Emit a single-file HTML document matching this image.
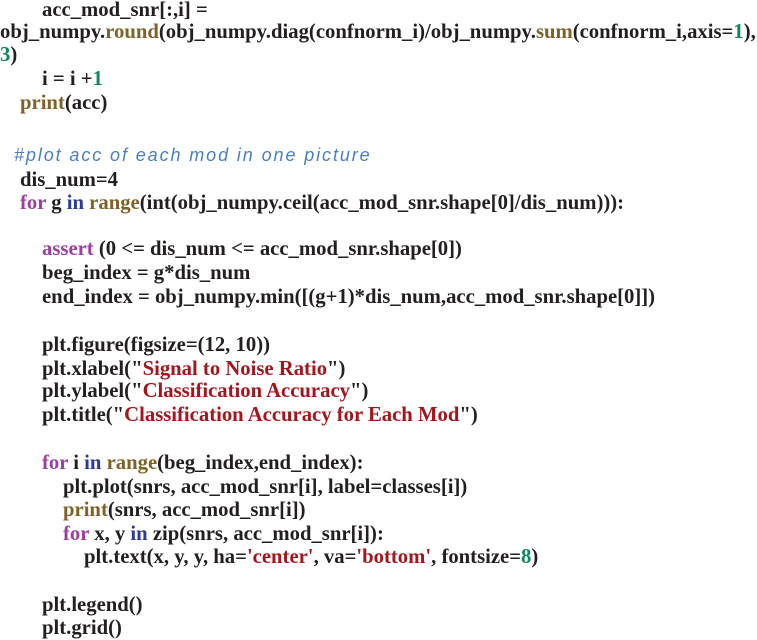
<!DOCTYPE html>
<html><head><meta charset="utf-8"><style>
html,body{margin:0;padding:0;background:#fff;width:757px;height:640px;overflow:hidden}
.l{position:absolute;white-space:pre;font-family:"Liberation Serif",serif;font-weight:bold;font-size:20.7px;line-height:24px;color:#231f20}
.b{color:#7f6229}.g{color:#0b8a5c}.p{color:#9b3fa3}.k{color:#2a3a9e}.r{color:#a3161d}
.c{font-family:"Liberation Sans",sans-serif;font-style:italic;font-weight:normal;color:#4a7fc4;font-size:18px;letter-spacing:1.9px}
</style></head><body>
<div class="l" style="top:-2px;left:42px">acc_mod_snr[:,i] =</div>
<div class="l" style="top:20px;left:0">obj_numpy.<span class="b">round</span>(obj_numpy.diag(confnorm_i)/obj_numpy.<span class="b">sum</span>(confnorm_i,axis=<span class="g">1</span>),</div>
<div class="l" style="top:43px;left:0"><span class="g">3</span>)</div>
<div class="l" style="top:67px;left:42px">i = i +<span class="g">1</span></div>
<div class="l" style="top:91px;left:20px"><span class="b">print</span>(acc)</div>
<div class="l c" style="top:143px;left:14px">#plot acc of each mod in one picture</div>
<div class="l" style="top:168px;left:20px">dis_num=4</div>
<div class="l" style="top:191px;left:20px"><span class="p">for</span> g <span class="k">in</span> <span class="b">range</span>(int(obj_numpy.ceil(acc_mod_snr.shape[0]/dis_num))):</div>
<div class="l" style="top:237px;left:42px"><span class="p">assert</span> (0 &lt;= dis_num &lt;= acc_mod_snr.shape[0])</div>
<div class="l" style="top:261px;left:42px">beg_index = g*dis_num</div>
<div class="l" style="top:285px;left:42px">end_index = obj_numpy.min([(g+1)*dis_num,acc_mod_snr.shape[0]])</div>
<div class="l" style="top:333px;left:42px">plt.figure(figsize=(12, 10))</div>
<div class="l" style="top:357px;left:42px">plt.xlabel("<span class="r">Signal to Noise Ratio</span>")</div>
<div class="l" style="top:379px;left:42px">plt.ylabel("<span class="r">Classification Accuracy</span>")</div>
<div class="l" style="top:403px;left:42px">plt.title("<span class="r">Classification Accuracy for Each Mod</span>")</div>
<div class="l" style="top:451px;left:42px"><span class="p">for</span> i <span class="k">in</span> <span class="b">range</span>(beg_index,end_index):</div>
<div class="l" style="top:475px;left:63px">plt.plot(snrs, acc_mod_snr[i], label=classes[i])</div>
<div class="l" style="top:498px;left:63px"><span class="b">print</span>(snrs, acc_mod_snr[i])</div>
<div class="l" style="top:522px;left:63px"><span class="p">for</span> x, y <span class="k">in</span> zip(snrs, acc_mod_snr[i]):</div>
<div class="l" style="top:545px;left:84px">plt.text(x, y, y, ha=<span class="r">'center'</span>, va=<span class="r">'bottom'</span>, fontsize=<span class="g">8</span>)</div>
<div class="l" style="top:593px;left:42px">plt.legend()</div>
<div class="l" style="top:616px;left:42px">plt.grid()</div>
</body></html>
